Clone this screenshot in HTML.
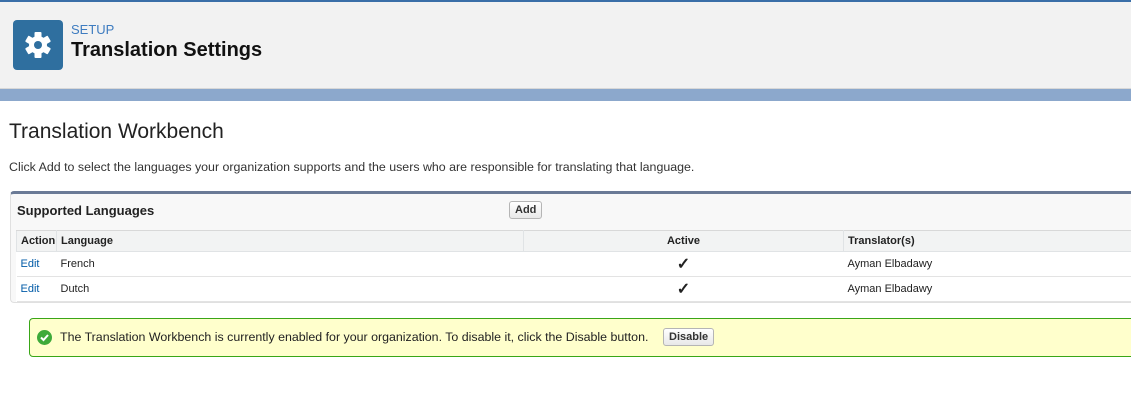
<!DOCTYPE html>
<html><head><style>
body{margin:0;width:1131px;height:418px;overflow:hidden;background:#fff;font-family:"Liberation Sans",Arial,sans-serif;position:relative}
.top{position:absolute;left:0;top:0;width:1131px;height:2px;background:#3a6fa8}
.hdr{position:absolute;left:0;top:2px;width:1131px;height:86px;background:#f2f2f2;border-bottom:1px solid #d8d8d8}
.band{position:absolute;left:0;top:89px;width:1131px;height:12px;background:#8ca8cc}
.icon{position:absolute;left:13px;top:18px;width:50px;height:50px;background:#2f6f9f;border-radius:4px}
.setup{position:absolute;left:71px;top:20px;font-size:13px;color:#3e7cc0}
.title{position:absolute;left:71px;top:37px;font-size:20px;font-weight:bold;color:#111}
h1{position:absolute;left:9px;top:120px;margin:0;font-size:21px;font-weight:normal;color:#222}
.desc{position:absolute;left:9px;top:160px;font-size:12.4px;color:#333}
.panel{position:absolute;left:10px;top:191px;width:1130px;height:108px;background:#f8f8f8;border-top:3px solid #6a7a96;border-left:1px solid #e0e0e0;border-bottom:1px solid #e0e0e0;border-radius:4px 0 0 4px}
.ptitle{position:absolute;left:6px;top:9px;font-size:13px;font-weight:bold;color:#222}
.btn{position:absolute;font-size:11px;font-weight:bold;color:#333;background:linear-gradient(#fff,#e8e8e8);border:1px solid #b5b5b5;border-radius:3px;padding:2px 5px}
table{position:absolute;left:5px;top:36px;width:1125px;border-collapse:collapse;font-size:11px;color:#222;background:#fff;table-layout:fixed}
th{background:#f2f3f3;font-weight:bold;text-align:left;height:20px;padding:0 4px;border:1px solid #e0e3e5;border-top:1px solid #d8d8d8}
td{height:24px;padding:0 4px;border-bottom:1px solid #e3e3e3}
a{color:#015ba7;text-decoration:none}
.msg{position:absolute;left:29px;top:318px;width:1110px;height:37px;background:#ffffcc;border:1px solid #39a617;border-radius:4px}
.chk{position:absolute;left:7px;top:11px;width:15px;height:15px;border-radius:50%;background:#3eaa3a}
.ck{text-align:center;font-size:16px;font-weight:bold}
</style></head><body>
<div class="top"></div>
<div class="hdr">
<div class="icon"><svg width="50" height="50" viewBox="0 0 50 50"><g fill="#fff" transform="translate(25 25)"><circle r="9"/><g id="t"><rect x="-3.5" y="-13" width="7" height="7" rx="1"/></g><use href="#t" transform="rotate(60)"/><use href="#t" transform="rotate(120)"/><use href="#t" transform="rotate(180)"/><use href="#t" transform="rotate(240)"/><use href="#t" transform="rotate(300)"/></g><circle cx="25" cy="25" r="4" fill="#2f6f9f"/></svg></div>
<div class="setup">SETUP</div>
<div class="title">Translation Settings</div>
</div>
<div class="band"></div>
<h1>Translation Workbench</h1>
<div class="desc">Click Add to select the languages your organization supports and the users who are responsible for translating that language.</div>
<div class="panel">
<div class="ptitle">Supported Languages</div>
<div class="btn" style="left:498px;top:7px">Add</div>
<table>
<col style="width:40px"><col style="width:467px"><col style="width:320px"><col>
<tr><th>Action</th><th>Language</th><th style="text-align:center">Active</th><th>Translator(s)</th></tr>
<tr><td><a>Edit</a></td><td>French</td><td class="ck">✓</td><td>Ayman Elbadawy</td></tr>
<tr><td><a>Edit</a></td><td>Dutch</td><td class="ck">✓</td><td>Ayman Elbadawy</td></tr>
</table>
</div>
<div class="msg"><div class="chk"><svg width="15" height="15"><path d="M4 7.5l2.5 2.5 4.5-5" stroke="#fff" stroke-width="2" fill="none"/></svg></div>
<div style="position:absolute;left:30px;top:11px;font-size:12.4px;color:#222">The Translation Workbench is currently enabled for your organization. To disable it, click the Disable button.</div>
<div class="btn" style="left:633px;top:9px">Disable</div></div>
</body></html>
